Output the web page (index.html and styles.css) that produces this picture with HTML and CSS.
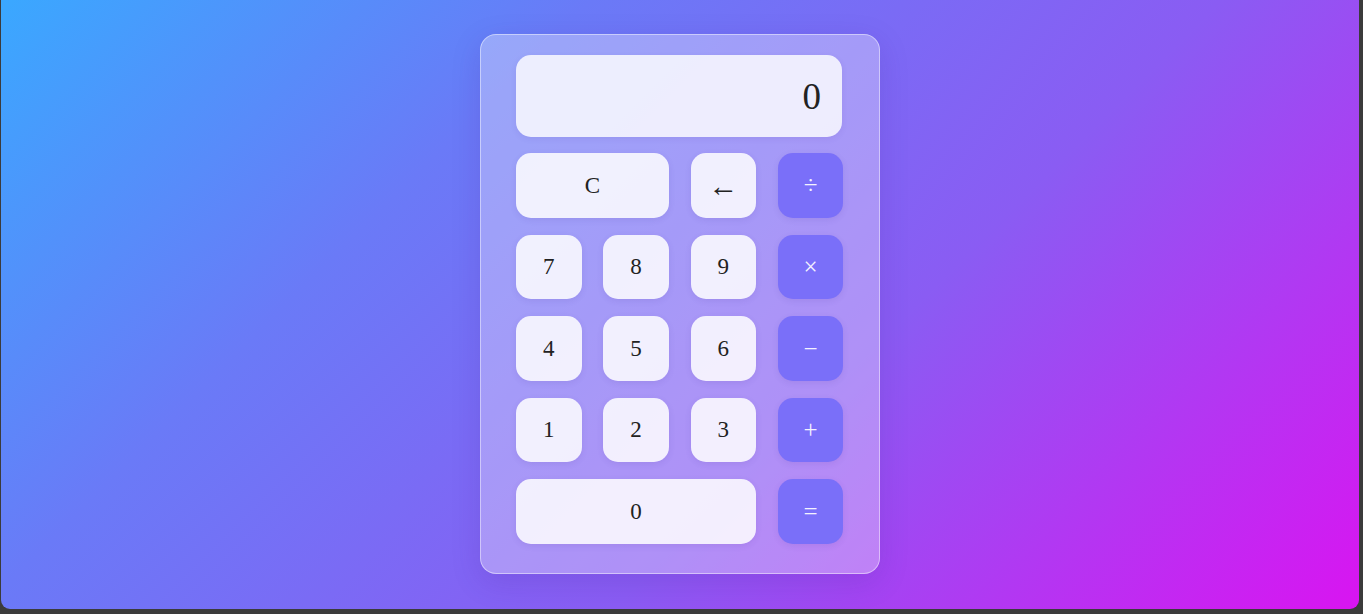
FILE: index.html
```html
<!DOCTYPE html>
<html lang="en">
<head>
<meta charset="utf-8">
<title>Calculator</title>
<link rel="stylesheet" href="styles.css">
</head>
<body>
<main class="stage">
  <section class="calc">
    <div class="display">0</div>
    <div class="keys">
      <button class="key wide">C</button>
      <button class="key back">←</button>
      <button class="key op">÷</button>
      <button class="key">7</button>
      <button class="key">8</button>
      <button class="key">9</button>
      <button class="key op">×</button>
      <button class="key">4</button>
      <button class="key">5</button>
      <button class="key">6</button>
      <button class="key op">−</button>
      <button class="key">1</button>
      <button class="key">2</button>
      <button class="key">3</button>
      <button class="key op">+</button>
      <button class="key zero">0</button>
      <button class="key op">=</button>
    </div>
  </section>
</main>
</body>
</html>
```
FILE: styles.css
```css
html, body {
  margin: 0;
  padding: 0;
  height: 100%;
}
body {
  background: #3b3b3b;
  font-family: "Liberation Serif", "Times New Roman", serif;
}
.stage {
  margin-left: 1px;
  width: 1358px;
  height: 609px;
  border-radius: 0 0 9px 9px;
  background: linear-gradient(135deg, #3aa8ff 0%, #6a7af7 30%, #8a5cf3 62%, #d914f1 100%);
  display: flex;
  align-items: center;
  justify-content: center;
}
.calc {
  box-sizing: border-box;
  width: 400px;
  padding: 20px 35px 29px 35px;
  margin-top: -1px;
  border: 1px solid rgba(255, 255, 255, 0.45);
  border-radius: 16px;
  background: rgba(255, 255, 255, 0.32);
  box-shadow: 0 8px 30px rgba(60, 20, 140, 0.15);
}
.display {
  box-sizing: border-box;
  width: 326px;
  height: 82px;
  margin-bottom: 16px;
  padding: 0 21px;
  border-radius: 15px;
  background: rgba(250, 250, 255, 0.86);
  color: #222;
  font-size: 37px;
  display: flex;
  align-items: center;
  justify-content: flex-end;
  box-shadow: 0 2px 6px rgba(60, 40, 140, 0.08);
}
.keys {
  display: grid;
  grid-template-columns: repeat(4, 65.5px);
  grid-auto-rows: 64.5px;
  column-gap: 21.8px;
  row-gap: 17px;
}
.key {
  border: none;
  border-radius: 15px;
  background: rgba(255, 255, 255, 0.85);
  color: #222;
  font-family: "Liberation Serif", "Times New Roman", serif;
  font-size: 23px;
  padding: 0;
  box-shadow: 0 2px 6px rgba(60, 40, 140, 0.1);
}
.wide {
  grid-column: span 2;
}
.zero {
  grid-column: span 3;
}
.back {
  font-size: 30px;
}
.op {
  background: #7a6ff9;
  color: #f4f2ff;
  font-size: 25px;
}
```
